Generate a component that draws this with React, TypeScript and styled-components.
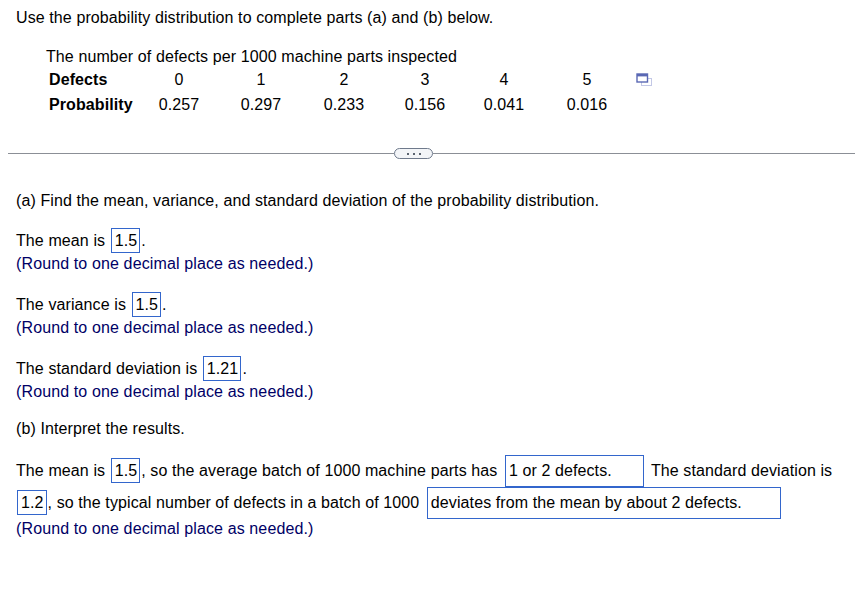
import React from "react";
import styled, { createGlobalStyle } from "styled-components";

const Global = createGlobalStyle`
  html, body { margin: 0; padding: 0; background: #fff; }
  body { font-family: "Liberation Sans", Arial, sans-serif; font-size: 16px; letter-spacing: 0.1px; color: #000; }
`;

const Page = styled.div`
  width: 863px;
  height: 594px;
  overflow: hidden;
  display: flex;
  flex-direction: column;
`;

const Top = styled.section`
  height: 148px;
  padding: 9px 0 0 16px;
  box-sizing: border-box;
`;

const Intro = styled.div`
  line-height: 18px;
`;

const Caption = styled.div`
  line-height: 18px;
  margin: 21px 0 0 30px;
`;

const DataGrid = styled.div`
  display: grid;
  grid-template-columns: 89px 82px 82px 84px 78px 80px 86px 24px;
  grid-auto-rows: 25px;
  margin: 1px 0 0 33px;
  align-items: center;
`;

const Head = styled.div`
  font-weight: 700;
`;

const Cell = styled.div`
  text-align: center;
`;

const IconCell = styled.div`
  display: flex;
  padding-left: 6px;
`;

const Divider = styled.div`
  display: flex;
  align-items: center;
  height: 11px;
  margin: 0 8px;
`;

const Rule = styled.div<{ $w?: number }>`
  flex: ${(p) => (p.$w ? `0 0 ${p.$w}px` : "1")};
  height: 1px;
  background: #8b8f96;
`;

const Pill = styled.div`
  width: 39px;
  height: 11px;
  box-sizing: border-box;
  border: 1px solid #6f7a8c;
  border-radius: 6px;
  background: #f3f5f8;
  display: flex;
  align-items: center;
  justify-content: center;
  gap: 4px;
`;

const Dot = styled.span`
  width: 2px;
  height: 2px;
  background: #5b6470;
`;

const Body = styled.section`
  padding: 33px 0 0 16px;
`;

const Line = styled.div<{ $h?: number; $mt?: number }>`
  line-height: ${(p) => p.$h ?? 21}px;
  height: ${(p) => p.$h ?? 21}px;
  margin-top: ${(p) => p.$mt ?? 0}px;
  white-space: nowrap;
`;

const Hint = styled(Line)`
  color: #000066;
  letter-spacing: 0.125px;
`;

const Answer = styled.span<{ $w?: number; $h?: number; $ml?: number }>`
  display: inline-block;
  box-sizing: border-box;
  border: 1px solid #3366cc;
  height: ${(p) => p.$h ?? 25}px;
  line-height: ${(p) => (p.$h ?? 25) - 2}px;
  width: ${(p) => (p.$w ? `${p.$w}px` : "auto")};
  padding: 0 2px 0 3px;
  margin: -2px 1px 0 ${(p) => p.$ml ?? 1}px;
  text-align: left;
  vertical-align: middle;
`;

const Trailing = styled.span`
  margin-left: 6px;
`;

const WindowIcon = () => (
  <svg width="17" height="14" viewBox="0 0 17 14" style={{ display: "block" }}>
    <rect x="5.5" y="5.5" width="10" height="7" fill="#fff" stroke="#c3c8e6" strokeWidth="1" />
    <rect x="1" y="1" width="10.5" height="8" fill="#fff" stroke="#5a68b4" strokeWidth="1.4" />
    <rect x="1" y="1" width="10.5" height="2.4" fill="#5a68b4" />
  </svg>
);

const defects = ["0", "1", "2", "3", "4", "5"];
const probs = ["0.257", "0.297", "0.233", "0.156", "0.041", "0.016"];
const hint = "(Round to one decimal place as needed.)";

export default function App() {
  return (
    <Page>
      <Global />
      <Top>
        <Intro>Use the probability distribution to complete parts (a) and (b) below.</Intro>
        <Caption>The number of defects per 1000 machine parts inspected</Caption>
        <DataGrid>
          <Head>Defects</Head>
          {defects.map((d) => (
            <Cell key={d}>{d}</Cell>
          ))}
          <IconCell>
            <WindowIcon />
          </IconCell>
          <Head>Probability</Head>
          {probs.map((d) => (
            <Cell key={d}>{d}</Cell>
          ))}
        </DataGrid>
      </Top>
      <Divider>
        <Rule $w={386} />
        <Pill>
          <Dot />
          <Dot />
          <Dot />
        </Pill>
        <Rule />
      </Divider>
      <Body>
        <Line $h={18}>(a) Find the mean, variance, and standard deviation of the probability distribution.</Line>
        <Line $h={25} $mt={18}>
          The mean is <Answer>1.5</Answer>.
        </Line>
        <Hint>{hint}</Hint>
        <Line $h={25} $mt={18}>
          The variance is <Answer>1.5</Answer>.
        </Line>
        <Hint>{hint}</Hint>
        <Line $h={25} $mt={18}>
          The standard deviation is <Answer>1.21</Answer>.
        </Line>
        <Hint>{hint}</Hint>
        <Line $h={18} $mt={18}>(b) Interpret the results.</Line>
        <Line $h={32} $mt={17}>
          The mean is <Answer>1.5</Answer>, so the average batch of 1000 machine parts has{" "}
          <Answer $w={139} $h={32} $ml={3}>1 or 2 defects.</Answer>
          <Trailing>The standard deviation is</Trailing>
        </Line>
        <Line $h={32}>
          <Answer>1.2</Answer>, so the typical number of defects in a batch of 1000{" "}
          <Answer $w={354} $h={32} $ml={3}>deviates from the mean by about 2 defects.</Answer>
        </Line>
        <Hint $h={20}>{hint}</Hint>
      </Body>
    </Page>
  );
}
